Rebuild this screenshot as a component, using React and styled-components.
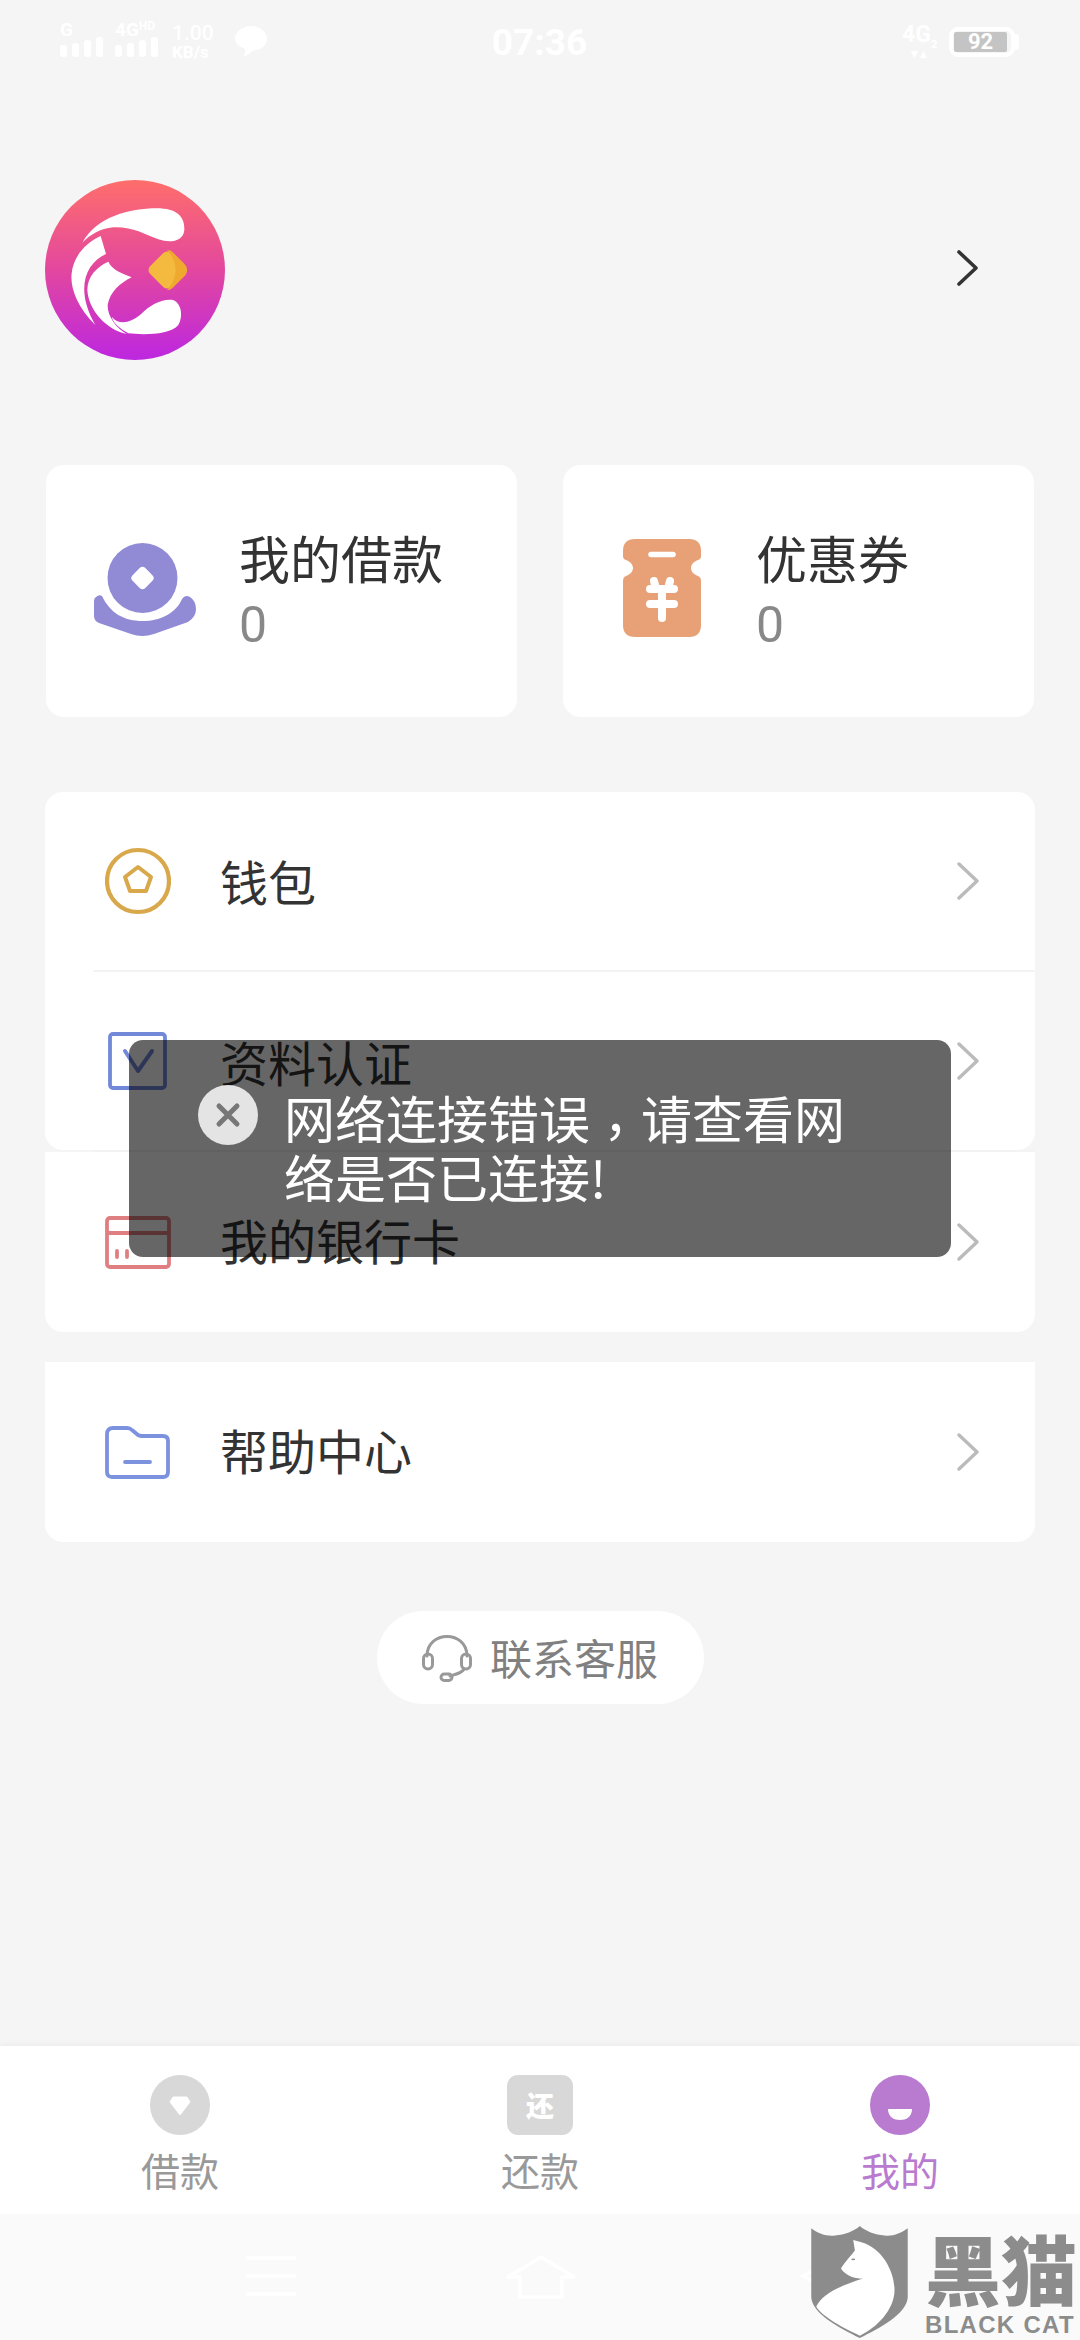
import React from "react";
import styled, { createGlobalStyle } from "styled-components";

const GlobalStyle = createGlobalStyle`
  html, body { margin: 0; padding: 0; background: #f5f5f5; }
  * { box-sizing: border-box; }
`;

const CJK = `"Noto Sans CJK SC", "Noto Sans", sans-serif`;

const Page = styled.div`
  position: relative;
  width: 1080px;
  height: 2340px;
  overflow: hidden;
  display: flex;
  flex-direction: column;
  background: #f5f5f5;
  font-family: ${CJK};
`;

// status bar
const StatusBar = styled.div`
  height: 88px;
  padding: 22px 61px 0 60px;
  display: grid;
  grid-template-columns: 1fr auto 1fr;
  align-items: start;
  color: #fff;
  font-family: "Roboto", sans-serif;
`;
const StatusSide = styled.div`
  display: flex;
  justify-content: ${(p) => (p.$right ? "flex-end" : "flex-start")};
  align-items: flex-start;
  gap: ${(p) => (p.$right ? "13px" : "12px")};
`;
const Signal = styled.div`
  width: ${(p) => p.$w}px;
  display: flex;
  flex-direction: column;
  font-size: 19px;
  font-weight: 700;
  line-height: 15px;
  white-space: nowrap;
  sup {
    font-size: 12px;
    line-height: 0;
    vertical-align: 6px;
  }
`;
const Bars = styled.div`
  display: flex;
  align-items: flex-end;
  gap: 5px;
  height: 20px;
`;
const Bar = styled.i`
  width: 7px;
  height: ${(p) => p.$h}px;
  border-radius: 3px;
  background: #fff;
`;
const Speed = styled.div`
  font-size: 21px;
  font-weight: 500;
  line-height: 22px;
  span {
    display: block;
    font-size: 17px;
    line-height: 16px;
    font-weight: 700;
  }
`;
const Bubble = styled.svg`
  margin: 3px 0 0 8px;
`;
const Clock = styled.div`
  font-size: 37px;
  font-weight: 700;
  line-height: 42px;
`;
const NetworkRight = styled.div`
  width: 34px;
  margin-top: 1px;
  font-size: 23px;
  font-weight: 700;
  line-height: 24px;
  white-space: nowrap;
  sub {
    font-size: 11px;
    line-height: 0;
  }
`;
const NetworkArrows = styled.svg`
  display: block;
  margin: 3px auto 0;
`;
const Battery = styled.div`
  position: relative;
  width: 66px;
  height: 30px;
  margin: 5px 4px 0 0;
  padding: 1px 4px 1px 1px;
  border: 4px solid #fff;
  border-radius: 9px;
  display: flex;
  &::after {
    content: "";
    position: absolute;
    right: -8px;
    top: 3px;
    width: 4px;
    height: 16px;
    border-radius: 0 3px 3px 0;
    background: #fff;
  }
`;
const BatteryFill = styled.div`
  flex: 1;
  background: #c4c4c4;
  border-radius: 2px;
  font-size: 22px;
  font-weight: 700;
  line-height: 20px;
  text-align: center;
`;

// profile row
const Profile = styled.div`
  height: 377px;
  padding: 92px 46px 0 45px;
  display: flex;
  justify-content: space-between;
  align-items: flex-start;
`;
const ProfileArrow = styled.div`
  margin: 70px 54px 0 0;
  width: 24px;
  height: 36px;
`;

const CardRow = styled.div`
  display: grid;
  grid-template-columns: 471px 471px;
  gap: 46px;
  padding: 0 0 0 46px;
`;
const Card = styled.div`
  height: 252px;
  background: #fff;
  border-radius: 18px;
  display: flex;
  align-items: flex-start;
  padding: 64px 0 0 ${(p) => p.$pad}px;
`;
const CardIcon = styled.div`
  width: ${(p) => p.$w}px;
  margin-top: ${(p) => p.$top}px;
  margin-right: ${(p) => p.$gap}px;
  flex: none;
  svg { display: block; }
`;
const CardTitle = styled.div`
  font-size: 51px;
  line-height: 56px;
  color: #333;
`;
const CardValue = styled.div`
  font-family: "Roboto", sans-serif;
  font-size: 50px;
  line-height: 58px;
  margin-top: 11px;
  color: #888;
`;

const Menu = styled.div`
  margin: 75px 45px 0;
  display: flex;
  flex-direction: column;
`;
const MenuGroup = styled.div`
  background: #fff;
  border-radius: ${(p) => p.$radius};
  margin-top: ${(p) => p.$top || 0}px;
  height: ${(p) => p.$h}px;
`;
const MenuRow = styled.div`
  height: ${(p) => p.$h || 178}px;
  display: flex;
  align-items: center;
  padding: 0 55px 0 60px;
`;
const Divider = styled.div`
  height: 2px;
  margin-left: 48px;
  background: #f3f3f3;
`;
const MenuIcon = styled.div`
  width: 66px;
  margin-right: 49px;
  display: flex;
  justify-content: center;
  svg { display: block; }
`;
const MenuText = styled.div`
  flex: 1;
  font-size: 48px;
  line-height: 56px;
  color: #333;
  margin-bottom: ${(p) => p.$lift || 0}px;
`;

const Contact = styled.div`
  align-self: center;
  margin-top: 69px;
  width: 327px;
  height: 93px;
  border-radius: 47px;
  background: #fff;
  display: flex;
  align-items: center;
  justify-content: center;
  gap: 18px;
  font-size: 42px;
  color: #808080;
`;
const ContactLabel = styled.span`
  margin-bottom: 3px;
`;

// bottom tabs
const TabBar = styled.div`
  margin-top: auto;
  height: 168px;
  background: #fff;
  box-shadow: 0 -2px 6px rgba(0, 0, 0, 0.04);
  display: grid;
  grid-template-columns: repeat(3, 1fr);
  padding: 29px 0 0;
`;
const Tab = styled.div`
  display: flex;
  flex-direction: column;
  align-items: center;
  font-size: 39px;
  line-height: 46px;
  color: ${(p) => (p.$active ? "#b97bcf" : "#999")};
  svg { display: block; margin-bottom: 11px; }
`;
const TabGlyph = styled.div`
  width: 66px;
  height: 60px;
  margin-bottom: 11px;
  border-radius: 11px;
  background: #d8d8d8;
  color: #fff;
  font-size: 28px;
  font-weight: 900;
  line-height: 60px;
  text-align: center;
`;

const SystemNav = styled.div`
  height: 126px;
  background: #fafafa;
  display: flex;
  align-items: flex-start;
  padding: 41px 0 0 246px;
`;
const SystemIcon = styled.div`
  margin-right: ${(p) => p.$gap}px;
  svg { display: block; }
`;

// overlays
const Toast = styled.div`
  position: absolute;
  left: 129px;
  top: 1040px;
  width: 822px;
  height: 217px;
  border-radius: 14px;
  background: rgba(0, 0, 0, 0.6);
  padding: 45px 90px 0 69px;
  display: flex;
  align-items: flex-start;
  gap: 26px;
  color: #fff;
`;
const ToastClose = styled.div`
  flex: none;
  width: 60px;
  height: 60px;
  border-radius: 50%;
  background: #e4e4e4;
  display: flex;
  align-items: center;
  justify-content: center;
`;
const ToastText = styled.div`
  font-size: 51px;
  line-height: 59px;
  margin-top: 3px;
`;
const ToastComma = styled.span`
  font-family: "Noto Sans CJK TC", sans-serif;
  line-height: 0;
  vertical-align: -0.24em;
`;

const Watermark = styled.div`
  position: absolute;
  left: 811px;
  top: 2226px;
  width: 269px;
  display: flex;
  gap: 17px;
  color: #8c8c8c;
`;
const WatermarkText = styled.div`
  flex: none;
  display: flex;
  flex-direction: column;
  align-items: flex-start;
`;
const WatermarkCn = styled.div`
  font-size: 76px;
  font-weight: 900;
  line-height: 76px;
  margin-top: 3px;
`;
const WatermarkEn = styled.div`
  font-family: "Liberation Sans", sans-serif;
  font-size: 24px;
  font-weight: 700;
  line-height: 24px;
  margin-top: 8px;
  letter-spacing: 1.3px;
  white-space: nowrap;
`;

const Chevron = ({ color = "#bbb", width = 24, height = 38 }) => (
  <svg width={width} height={height} viewBox="0 0 24 38" fill="none">
    <path d="M3 2 L21 19 L3 36" stroke={color} strokeWidth="3.4" strokeLinecap="round" strokeLinejoin="round" />
  </svg>
);

const Logo = () => (
  <svg width="180" height="180" viewBox="45 60 540 540">
    <defs>
      <linearGradient id="logoBg" x1="0" y1="0" x2="0" y2="1">
        <stop offset="0" stopColor="#ff6e6b" />
        <stop offset="0.5" stopColor="#e2479f" />
        <stop offset="1" stopColor="#bd27e0" />
      </linearGradient>
    </defs>
    <circle cx="315" cy="330" r="270" fill="url(#logoBg)" />
    <g fill="#fff">
      <path d="M157 248 C200 170 300 145 380 145 C440 145 465 170 463 210 C460 245 420 250 385 238 C340 222 310 200 250 202 C210 205 180 225 157 248Z" />
      <path d="M212 228 L228 282 C165 310 135 390 196 495 C140 440 120 380 125 340 C130 290 165 250 212 228Z" />
      <path d="M235 305 C250 335 280 340 305 352 C270 370 240 395 233 435 C232 470 260 505 290 522 C230 510 175 450 172 390 C172 350 200 320 235 305Z" />
      <path d="M245 470 C265 495 300 490 330 465 C365 430 400 415 430 420 C455 430 460 470 445 495 C420 525 340 525 295 520 C270 505 250 490 245 470Z" />
    </g>
    <rect x="367" y="286" width="88" height="88" rx="16" transform="rotate(45 411 330)" fill="#f4b93f" />
    <path d="M411 270 C420 270 424 272 430 278 L463 311 C474 322 474 338 463 349 L430 382 C424 388 418 391 411 391 C440 360 450 310 411 270Z" fill="#efa92f" />
  </svg>
);

const CoinIcon = () => (
  <svg width="102" height="94" viewBox="0 0 102 94">
    <circle cx="48.5" cy="35" r="35" fill="#918bd6" />
    <rect x="39.5" y="26" width="18" height="18" rx="4" transform="rotate(45 48.5 35)" fill="#fff" />
    <path d="M2 54 Q5 51 8 53 C16 70 30 78 48.5 78 C67 78 82 70 88 56 Q91 51 96 54 Q102 58 102 66 Q102 74 94 79 L60 91 Q48 95 37 91 L5 80 Q0 78 0 73 L0 58 Q0 55 2 54Z" fill="#918bd6" />
  </svg>
);

const CouponIcon = () => (
  <svg width="78" height="98" viewBox="0 0 78 98">
    <path d="M12 0 H66 Q78 0 78 12 V17 Q78 20 75 21 C70 23 68 26 68 29 C68 32 70 35 75 37 Q78 38 78 42 V86 Q78 98 66 98 H12 Q0 98 0 86 V42 Q0 38 3 37 C8 35 10 32 10 29 C10 26 8 23 3 21 Q0 20 0 17 V12 Q0 0 12 0Z" fill="#e8a077" />
    <g stroke="#fff" strokeLinecap="round" fill="none">
      <path d="M28 15.5 H50" strokeWidth="5.5" />
      <path d="M31 42 L33 50 M47 42 L45 50 M27 50 H51 M27 65 H51 M39 50 V79" strokeWidth="8" />
    </g>
  </svg>
);

const WalletIcon = () => (
  <svg width="66" height="68" viewBox="0 0 66 68" fill="none">
    <circle cx="33" cy="34" r="31" stroke="#d8a84a" strokeWidth="4.2" />
    <path d="M33 20 L46 30 L41 44 H25 L20 30Z" stroke="#d8a84a" strokeWidth="4" strokeLinejoin="round" />
  </svg>
);

const VerifyIcon = () => (
  <svg width="60" height="58" viewBox="0 0 60 58" fill="none">
    <rect x="2" y="2" width="55" height="54" rx="3" stroke="#7288d8" strokeWidth="3.8" />
    <path d="M17 19 L30 39 L44 19" stroke="#7288d8" strokeWidth="4" strokeLinecap="round" strokeLinejoin="round" />
  </svg>
);

const BankIcon = () => (
  <svg width="66" height="53" viewBox="0 0 66 53" fill="none">
    <rect x="2" y="2" width="62" height="49" rx="3" stroke="#e07f82" strokeWidth="3.8" />
    <path d="M2 17 H64" stroke="#e07f82" strokeWidth="3.8" />
    <path d="M12 35 V41 M22 35 V41" stroke="#e07f82" strokeWidth="3.8" strokeLinecap="round" />
  </svg>
);

const FolderIcon = () => (
  <svg width="66" height="53" viewBox="0 0 66 53" fill="none">
    <path d="M2 8 Q2 2 8 2 H22 Q25 2 27 4 L33 9 Q35 10 37 10 H58 Q63 10 63 15 V46 Q63 51 58 51 H7 Q2 51 2 46Z" stroke="#7d92de" strokeWidth="3.8" strokeLinejoin="round" />
    <path d="M20 36 H45" stroke="#7d92de" strokeWidth="3.8" strokeLinecap="round" />
  </svg>
);

const HeadsetIcon = () => (
  <svg width="50" height="48" viewBox="0 0 50 48" fill="none" stroke="#999" strokeWidth="3" strokeLinecap="round">
    <path d="M5 22 C5 -4 45 -4 45 22" />
    <rect x="1.5" y="20" width="9" height="15" rx="4.5" />
    <rect x="39.5" y="20" width="9" height="15" rx="4.5" />
    <path d="M42 35 C40 39 35 40 28 42" />
    <rect x="19" y="40" width="11" height="6.5" rx="3.2" />
  </svg>
);

const LoanTabIcon = () => (
  <svg width="60" height="60" viewBox="0 0 60 60">
    <circle cx="30" cy="30" r="30" fill="#d8d8d8" />
    <path d="M23 22 H37 L40 27 L30 40 L20 27Z" fill="#fff" strokeLinejoin="round" stroke="#fff" strokeWidth="1" />
  </svg>
);

const MineTabIcon = () => (
  <svg width="60" height="60" viewBox="0 0 60 60">
    <circle cx="30" cy="30" r="30" fill="#b97bcf" />
    <path d="M18 34 H42 C42 42 36 45 30 45 C24 45 18 42 18 34Z" fill="#fff" />
  </svg>
);

const ShieldLogo = () => (
  <svg width="97" height="112" viewBox="93 76 292 339">
    <path d="M93 83 C115 100 140 108 165 105 C195 102 222 92 240 76 C258 92 285 102 315 105 C340 108 365 98 385 83 V290 C385 340 300 385 240 415 C180 385 93 340 93 290Z" fill="#8c8c8c" />
    <path d="M220 118 L245 125 C310 145 345 215 345 270 C345 330 290 385 240 408 C190 385 125 350 108 320 C125 285 170 260 250 235 C225 238 195 225 183 205 C190 190 210 170 225 150Z" fill="#fff" />
    <ellipse cx="220" cy="177" rx="6" ry="3" fill="#8c8c8c" />
  </svg>
);

const HamburgerIcon = () => (
  <svg width="50" height="42" viewBox="0 0 50 42" stroke="#fff" strokeWidth="3.4">
    <path d="M0 3 H50 M0 21 H50 M0 39 H50" />
  </svg>
);

const HomeIcon = () => (
  <svg width="70" height="44" viewBox="0 0 70 44" fill="none" stroke="#fff" strokeWidth="3.4" strokeLinejoin="round">
    <path d="M2 22 L35 2 L68 22 H56 V42 H14 V22Z" />
  </svg>
);

const BackIcon = () => (
  <svg width="50" height="42" viewBox="0 0 50 42" fill="none" stroke="#fff" strokeWidth="3.4" strokeLinejoin="round">
    <path d="M2 21 L48 2 V40Z" />
  </svg>
);

const ToastX = () => (
  <svg width="26" height="26" viewBox="0 0 26 26" stroke="#777" strokeWidth="5" strokeLinecap="round">
    <path d="M4 4 L22 22 M22 4 L4 22" />
  </svg>
);

const SignalBars = () => (
  <Bars>
    <Bar $h={12} /><Bar $h={14} /><Bar $h={17} /><Bar $h={20} />
  </Bars>
);

export default function App() {
  return (
    <Page>
      <GlobalStyle />
      <StatusBar>
        <StatusSide>
          <Signal $w={43}>
            G
            <SignalBars />
          </Signal>
          <Signal $w={45}>
            <div>4G<sup>HD</sup></div>
            <SignalBars />
          </Signal>
          <Speed>
            1.00
            <span>KB/s</span>
          </Speed>
          <Bubble width="34" height="32" viewBox="0 0 34 34" fill="#fff">
            <path d="M17 1 C27 1 34 8 34 15 C34 22 27 27 19 27 C16 30 12 33 9 33 C11 30 11 27 10 25 C4 23 0 19 0 15 C0 8 7 1 17 1Z" />
          </Bubble>
        </StatusSide>
        <Clock>07:36</Clock>
        <StatusSide $right>
          <NetworkRight>
            4G<sub>2</sub>
            <NetworkArrows width="20" height="9" viewBox="0 0 20 10" fill="#fff">
              <path d="M1 1 H9 L5 9Z M11 9 H19 L15 1Z" />
            </NetworkArrows>
          </NetworkRight>
          <Battery>
            <BatteryFill>92</BatteryFill>
          </Battery>
        </StatusSide>
      </StatusBar>

      <Profile>
        <Logo />
        <ProfileArrow>
          <svg width="24" height="36" viewBox="0 0 24 36" fill="none">
            <path d="M3 2 L20 18 L3 34" stroke="#333" strokeWidth="3.6" strokeLinecap="round" strokeLinejoin="round" />
          </svg>
        </ProfileArrow>
      </Profile>

      <CardRow>
        <Card $pad={48}>
          <CardIcon $w={102} $top={14} $gap={43}><CoinIcon /></CardIcon>
          <div>
            <CardTitle>我的借款</CardTitle>
            <CardValue>0</CardValue>
          </div>
        </Card>
        <Card $pad={60}>
          <CardIcon $w={78} $top={10} $gap={55}><CouponIcon /></CardIcon>
          <div>
            <CardTitle>优惠券</CardTitle>
            <CardValue>0</CardValue>
          </div>
        </Card>
      </CardRow>

      <Menu>
        <MenuGroup $radius="18px" $h={358}>
          <MenuRow>
            <MenuIcon><WalletIcon /></MenuIcon>
            <MenuText $lift={3}>钱包</MenuText>
            <Chevron />
          </MenuRow>
          <Divider />
          <MenuRow>
            <MenuIcon><VerifyIcon /></MenuIcon>
            <MenuText>资料认证</MenuText>
            <Chevron />
          </MenuRow>
        </MenuGroup>
        <Divider />
        <MenuGroup $radius="0 0 18px 18px" $h={180}>
          <MenuRow $h={180}>
            <MenuIcon><BankIcon /></MenuIcon>
            <MenuText $lift={6}>我的银行卡</MenuText>
            <Chevron />
          </MenuRow>
        </MenuGroup>
        <MenuGroup $radius="0 0 18px 18px" $h={180} $top={30}>
          <MenuRow $h={180}>
            <MenuIcon><FolderIcon /></MenuIcon>
            <MenuText $lift={6}>帮助中心</MenuText>
            <Chevron />
          </MenuRow>
        </MenuGroup>
      </Menu>

      <Contact>
        <HeadsetIcon />
        <ContactLabel>联系客服</ContactLabel>
      </Contact>

      <TabBar>
        <Tab>
          <LoanTabIcon />
          借款
        </Tab>
        <Tab>
          <TabGlyph>还</TabGlyph>
          还款
        </Tab>
        <Tab $active>
          <MineTabIcon />
          我的
        </Tab>
      </TabBar>
      <SystemNav>
        <SystemIcon $gap={210}><HamburgerIcon /></SystemIcon>
        <SystemIcon $gap={224}><HomeIcon /></SystemIcon>
        <SystemIcon $gap={0}><BackIcon /></SystemIcon>
      </SystemNav>

      <Toast>
        <ToastClose><ToastX /></ToastClose>
        <ToastText>网络连接错误<ToastComma>，</ToastComma>请查看网络是否已连接!</ToastText>
      </Toast>

      <Watermark>
        <ShieldLogo />
        <WatermarkText>
          <WatermarkCn>黑猫</WatermarkCn>
          <WatermarkEn>BLACK CAT</WatermarkEn>
        </WatermarkText>
      </Watermark>
    </Page>
  );
}
